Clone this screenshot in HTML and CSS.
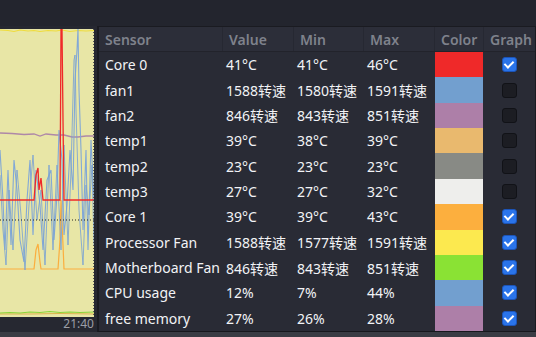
FILE: index.html
```html
<!DOCTYPE html>
<html lang="en">
<head>
    <meta charset="UTF-8">
    <title>Sensors</title>
    <link rel="stylesheet" href="styles.css">
</head>
<body>
    <div class="app">
        <div class="topbar"></div>

        <div class="main">
            <div class="graph-pane">
                <svg class="graph" width="94" height="288" viewBox="0 29 94 288">
                    <rect x="0" y="29" width="94" height="288" fill="#e8e6a6"/>
                    <!-- free memory / top line -->
                    <polyline fill="none" stroke="#efdc3c" stroke-width="1.2" points="0,30 8,30.5 14,31.5 20,30 28,31 34,30.5 40,31.5 48,30.5 56,31 62,30 70,31.5 78,30.5 86,31 94,30.5"/>
                    <!-- fan2 -->
                    <polyline fill="none" stroke="#ae88a8" stroke-width="1.3" points="0,133 12,133.5 18,134 24,134.5 34,134 40,136 46,134 56,135 64,135 72,137 78,137 86,136 94,136"/>
                    <!-- bottom lines -->
                    <polyline fill="none" stroke="#dcb44a" stroke-width="1" points="0,314 30,314 60,313.5 94,314"/>
                    <polyline fill="none" stroke="#8ad63a" stroke-width="1.2" points="0,313 10,312.5 20,313 30,312 40,312.5 50,311.5 60,312.5 70,312 80,312.5 94,312"/>
                    <!-- core 1 -->
                    <polyline fill="none" stroke="#fbae3e" stroke-width="1.2" points="0,269 34,269 36,250 38,244 40,262 41,269 58,269 60,240 61,200 63,245 64,269 94,269"/>
                    <!-- fan1 -->
                    <polyline fill="none" stroke="#82a8d6" stroke-width="1.1" points="0,150 3,200 5,250 8,170 11,245 14,160 17,190 20,240 24,262 27,200 30,160 33,235 36,170 40,205 43,250 47,180 51,170 54,240 57,195 59,130 62,160 64,235 67,205 70,150 73,190 75,80 77,50 78,29 79,90 81,150 83,230 86,150 88,250 91,140 94,200"/>
                    <!-- cpu usage -->
                    <polyline fill="none" stroke="#7aa2d2" stroke-width="1" opacity="0.85" points="0,175 3,230 6,265 9,190 13,250 17,170 21,215 25,270 29,205 33,155 37,220 41,190 45,265 49,165 53,250 57,165 61,250 64,145 68,245 71,170 74,60 75,55 76,110 79,210 83,265 86,185 89,215 92,165 94,245"/>
                    <!-- core 0 -->
                    <polyline fill="none" stroke="#ef2929" stroke-width="1.3" points="0,200 34,200 36,175 38,168 39,190 41,178 43,200 60,200 61,29 62,29 63,120 64,200 65,200 94,200"/>
                    <line x1="0" y1="220" x2="94" y2="220" stroke="#222" stroke-width="1" stroke-dasharray="1 2"/>
                    <line x1="93.5" y1="29" x2="93.5" y2="317" stroke="#555" stroke-width="1" stroke-dasharray="1 2"/>
                </svg>
                <div class="time">21:40</div>
            </div>

            <div class="sensors">
                <div class="row head">
                    <div class="cell">Sensor</div>
                    <div class="cell">Value</div>
                    <div class="cell">Min</div>
                    <div class="cell">Max</div>
                    <div class="cell">Color</div>
                    <div class="cell">Graph</div>
                </div>

                <div class="row">
                    <div class="cell">Core 0</div><div class="cell">41°C</div><div class="cell">41°C</div><div class="cell">46°C</div>
                    <div class="swatch red"></div><div class="cell check"><span class="box on"></span></div>
                </div>
                <div class="row">
                    <div class="cell">fan1</div><div class="cell">1588转速</div><div class="cell">1580转速</div><div class="cell">1591转速</div>
                    <div class="swatch blue"></div><div class="cell check"><span class="box"></span></div>
                </div>
                <div class="row">
                    <div class="cell">fan2</div><div class="cell">846转速</div><div class="cell">843转速</div><div class="cell">851转速</div>
                    <div class="swatch plum"></div><div class="cell check"><span class="box"></span></div>
                </div>
                <div class="row">
                    <div class="cell">temp1</div><div class="cell">39°C</div><div class="cell">38°C</div><div class="cell">39°C</div>
                    <div class="swatch tan"></div><div class="cell check"><span class="box"></span></div>
                </div>
                <div class="row">
                    <div class="cell">temp2</div><div class="cell">23°C</div><div class="cell">23°C</div><div class="cell">23°C</div>
                    <div class="swatch grey"></div><div class="cell check"><span class="box"></span></div>
                </div>
                <div class="row">
                    <div class="cell">temp3</div><div class="cell">27°C</div><div class="cell">27°C</div><div class="cell">32°C</div>
                    <div class="swatch white"></div><div class="cell check"><span class="box"></span></div>
                </div>
                <div class="row">
                    <div class="cell">Core 1</div><div class="cell">39°C</div><div class="cell">39°C</div><div class="cell">43°C</div>
                    <div class="swatch orange"></div><div class="cell check"><span class="box on"></span></div>
                </div>
                <div class="row">
                    <div class="cell">Processor Fan</div><div class="cell">1588转速</div><div class="cell">1577转速</div><div class="cell">1591转速</div>
                    <div class="swatch yellow"></div><div class="cell check"><span class="box on"></span></div>
                </div>
                <div class="row">
                    <div class="cell">Motherboard Fan</div><div class="cell">846转速</div><div class="cell">843转速</div><div class="cell">851转速</div>
                    <div class="swatch green"></div><div class="cell check"><span class="box on"></span></div>
                </div>
                <div class="row">
                    <div class="cell">CPU usage</div><div class="cell">12%</div><div class="cell">7%</div><div class="cell">44%</div>
                    <div class="swatch blue"></div><div class="cell check"><span class="box on"></span></div>
                </div>
                <div class="row">
                    <div class="cell">free memory</div><div class="cell">27%</div><div class="cell">26%</div><div class="cell">28%</div>
                    <div class="swatch plum"></div><div class="cell check"><span class="box on"></span></div>
                </div>
            </div>
        </div>

        <div class="statusbar"></div>
    </div>
</body>
</html>
```

FILE: styles.css
```css
body {
    margin: 0;
    background-color: #24262f;
    font-family: 'Noto Sans', 'Noto Sans CJK SC', sans-serif;
    font-size: 14px;
    color: #f2f3f6;
    overflow: hidden;
}

.app {
    width: 536px;
    height: 337px;
    display: flex;
    flex-direction: column;
}

.topbar {
    height: 26px;
    background-color: #23252e;
}

.main {
    display: flex;
    height: 306px;
}

.graph-pane {
    width: 97px;
    padding-top: 3px;
    box-sizing: border-box;
    background-color: #262831;
}

.graph {
    display: block;
}

.time {
    width: 94px;
    text-align: right;
    font-size: 12px;
    line-height: 14px;
    color: #9c9ea6;
}

.sensors {
    flex: 1;
    background-color: #292b35;
    border: 1px solid #1a1b21;
    border-left-width: 2px;
    border-bottom: 1px solid #17181d;
}

.row {
    display: grid;
    grid-template-columns: 123px 71px 70px 71px 49px 1fr;
    height: 25.36px;
    align-items: center;
}

.row.head {
    height: 24px;
    background-color: #2c2e39;
    border-bottom: 1px solid #22232b;
    color: #7f828c;
    font-weight: 600;
}

.head .cell {
    height: 100%;
    display: flex;
    align-items: center;
    padding-left: 6px;
    border-left: 1px solid #262832;
}

.head .cell:first-child {
    border-left: none;
    padding-left: 7px;
}

.cell {
    padding-left: 4px;
    white-space: nowrap;
    overflow: hidden;
}

.row .cell:first-child {
    padding-left: 6px;
}

.swatch {
    height: 100%;
    margin-left: 1px;
}

.red { background-color: #ef2929; }
.blue { background-color: #729fcf; }
.plum { background-color: #ad7fa8; }
.tan { background-color: #e9b96e; }
.grey { background-color: #888a85; }
.white { background-color: #eeeeec; }
.orange { background-color: #fcaf3e; }
.yellow { background-color: #fce94f; }
.green { background-color: #8ae234; }

.check {
    display: flex;
    justify-content: center;
    padding-left: 0;
}

.box {
    width: 13px;
    height: 13px;
    border: 1px solid #111217;
    border-radius: 3px;
    background-color: #1c1d23;
    position: relative;
}

.box.on {
    background-color: #2a74ea;
    border-color: #1c54b8;
}

.box.on::after {
    content: "";
    position: absolute;
    left: 3px;
    top: 1px;
    width: 4px;
    height: 7px;
    border: solid #fff;
    border-width: 0 2.5px 2.5px 0;
    transform: rotate(45deg);
}

.statusbar {
    height: 5px;
    background-color: #3a3c44;
}
```
